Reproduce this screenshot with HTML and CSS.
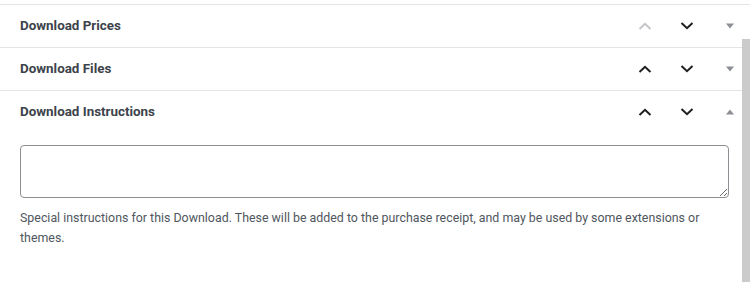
FILE: index.html
```html
<!DOCTYPE html>
<html>
<head>
<meta charset="utf-8">
<link rel="stylesheet" href="styles.css">
</head>
<body>
<div class="page">
  <div class="panel">
    <div class="box">
      <div class="header">
        <h2 class="title">Download Prices</h2>
        <div class="actions">
          <button class="btn disabled" aria-label="Move up"><svg width="14" height="8" viewBox="0 0 14 8"><polyline points="1.5,7 7,1.8 12.5,7" fill="none" stroke="currentColor" stroke-width="2"/></svg></button>
          <button class="btn" aria-label="Move down"><svg width="14" height="8" viewBox="0 0 14 8"><polyline points="1.5,1 7,6.2 12.5,1" fill="none" stroke="currentColor" stroke-width="2"/></svg></button>
          <button class="btn toggle" aria-label="Toggle panel"><svg width="8" height="6" viewBox="0 0 8 6"><polygon points="0,0.5 8,0.5 4,5.5" fill="currentColor"/></svg></button>
        </div>
      </div>
    </div>
    <div class="box">
      <div class="header">
        <h2 class="title">Download Files</h2>
        <div class="actions">
          <button class="btn" aria-label="Move up"><svg width="14" height="8" viewBox="0 0 14 8"><polyline points="1.5,7 7,1.8 12.5,7" fill="none" stroke="currentColor" stroke-width="2"/></svg></button>
          <button class="btn" aria-label="Move down"><svg width="14" height="8" viewBox="0 0 14 8"><polyline points="1.5,1 7,6.2 12.5,1" fill="none" stroke="currentColor" stroke-width="2"/></svg></button>
          <button class="btn toggle" aria-label="Toggle panel"><svg width="8" height="6" viewBox="0 0 8 6"><polygon points="0,0.5 8,0.5 4,5.5" fill="currentColor"/></svg></button>
        </div>
      </div>
    </div>
    <div class="box open">
      <div class="header">
        <h2 class="title">Download Instructions</h2>
        <div class="actions">
          <button class="btn" aria-label="Move up"><svg width="14" height="8" viewBox="0 0 14 8"><polyline points="1.5,7 7,1.8 12.5,7" fill="none" stroke="currentColor" stroke-width="2"/></svg></button>
          <button class="btn" aria-label="Move down"><svg width="14" height="8" viewBox="0 0 14 8"><polyline points="1.5,1 7,6.2 12.5,1" fill="none" stroke="currentColor" stroke-width="2"/></svg></button>
          <button class="btn toggle" aria-label="Toggle panel"><svg width="8" height="6" viewBox="0 0 8 6"><polygon points="0,5.5 8,5.5 4,0.5" fill="currentColor"/></svg></button>
        </div>
      </div>
      <div class="inside">
        <textarea class="field"></textarea>
        <p class="description">Special instructions for this Download. These will be added to the purchase receipt, and may be used by some extensions or themes.</p>
      </div>
    </div>
  </div>
  <div class="scrollbar"></div>
</div>
</body>
</html>
```
FILE: styles.css
```css
html, body {
  margin: 0;
  padding: 0;
  background: #ffffff;
}
body {
  font-family: Roboto, "Liberation Sans", sans-serif;
  width: 750px;
  height: 282px;
  overflow: hidden;
}
.page {
  position: relative;
  height: 282px;
  padding-top: 4px;
  box-sizing: border-box;
}
.panel {
  border-top: 1px solid #e4e4e4;
}
.box {
  border-bottom: 1px solid #e4e4e4;
}
.box.open {
  border-bottom: none;
}
.header {
  display: flex;
  align-items: center;
  height: 42px;
  padding-left: 20px;
}
.title {
  flex: 1;
  margin: 0;
  font-size: 13.4px;
  font-weight: 700;
  color: #3c434a;
  line-height: 20px;
}
.actions {
  display: flex;
  height: 42px;
}
.btn {
  width: 42px;
  height: 42px;
  padding: 0;
  margin: 0;
  border: none;
  background: transparent;
  display: flex;
  align-items: center;
  justify-content: center;
  color: #1e1e1e;
}
.btn svg {
  display: block;
}
.btn.disabled {
  color: #c3c4c7;
}
.btn.toggle {
  color: #8c8f94;
  padding-left: 2px;
  box-sizing: border-box;
}
.inside {
  padding: 12px 21px 0 20px;
}
.field {
  display: block;
  width: 100%;
  height: 53px;
  box-sizing: border-box;
  border: 1px solid #8c8f94;
  border-radius: 4px;
  margin: 0;
  background: #fff;
}
.description {
  margin: 10px 0 0 0;
  font-size: 12.4px;
  line-height: 20px;
  color: #50575e;
}
.scrollbar {
  position: absolute;
  right: 0;
  top: 39px;
  width: 8px;
  bottom: 0;
  background: #cbcbcb;
}
```
